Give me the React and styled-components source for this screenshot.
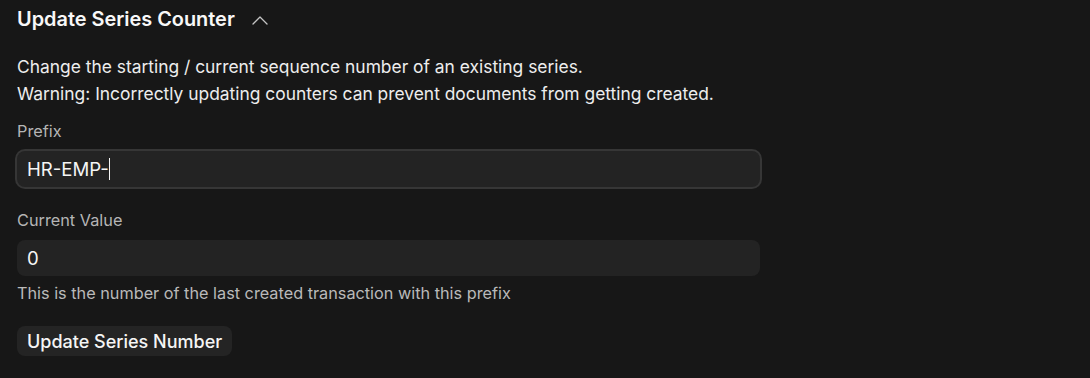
import React from "react";
import styled, { createGlobalStyle } from "styled-components";

const Global = createGlobalStyle`
  html, body { margin: 0; padding: 0; background: #171717; }
  body { font-family: Inter, "Noto Sans", sans-serif; color: #f5f5f5; -webkit-font-smoothing: antialiased; }
`;

const Page = styled.div`
  width: 1090px;
  height: 378px;
  box-sizing: border-box;
  padding: 8px 17px 0 17px;
  background: #171717;
`;

const Section = styled.section`
  width: 743px;
  display: flex;
  flex-direction: column;
`;

const Header = styled.div`
  display: flex;
  align-items: center;
  gap: 17px;
  height: 22px;
`;

const Title = styled.h2`
  margin: 0;
  font-size: 19.9px;
  font-weight: 600;
  color: #f8f8f8;
  line-height: 22px;
`;

const Chevron = styled.svg`
  width: 16px;
  height: 9px;
  margin-top: 3px;
  color: #c4c4c4;
`;

const Description = styled.p`
  margin: 22.5px 0 0 0;
  font-size: 17.4px;
  line-height: 27px;
  color: #ededed;
`;

const Field = styled.div`
  display: flex;
  flex-direction: column;
  margin-top: ${(p) => p.$mt}px;
`;

const Label = styled.label`
  font-size: 16.3px;
  line-height: 20px;
  color: #b5b5b5;
  margin-bottom: 10px;
`;

const Input = styled.div`
  height: 36px;
  box-sizing: border-box;
  background: #232323;
  border-radius: 8px;
  padding: 0 10px;
  display: flex;
  align-items: center;
  font-size: 18.6px;
  color: #f5f5f5;
  box-shadow: ${(p) => (p.$focused ? "0 0 0 2px #363636" : "none")};
`;

const Caret = styled.span`
  display: inline-block;
  width: 1px;
  height: 22px;
  background: #f5f5f5;
`;

const Help = styled.div`
  margin-top: 7px;
  font-size: 16.25px;
  line-height: 20px;
  color: #bababa;
`;

const Button = styled.button`
  margin-top: 23px;
  align-self: flex-start;
  height: 30px;
  padding: 0 10px;
  border: none;
  border-radius: 8px;
  background: #242424;
  color: #f5f5f5;
  font-family: inherit;
  font-size: 18px;
  font-weight: 500;
`;

export default function App() {
  return (
    <>
      <Global />
      <Page>
        <Section>
          <Header>
            <Title>Update Series Counter</Title>
            <Chevron viewBox="0 0 16 9" fill="none" stroke="currentColor" strokeWidth="1.3" strokeLinecap="round" strokeLinejoin="round">
              <polyline points="1,8 8,1 15,8" />
            </Chevron>
          </Header>
          <Description>
            Change the starting / current sequence number of an existing series.
            <br />
            Warning: Incorrectly updating counters can prevent documents from getting created.
          </Description>
          <Field $mt={14.5}>
            <Label>Prefix</Label>
            <Input $focused>
              HR-EMP-
              <Caret />
            </Input>
          </Field>
          <Field $mt={23}>
            <Label>Current Value</Label>
            <Input>0</Input>
          </Field>
          <Help>This is the number of the last created transaction with this prefix</Help>
          <Button>Update Series Number</Button>
        </Section>
      </Page>
    </>
  );
}
